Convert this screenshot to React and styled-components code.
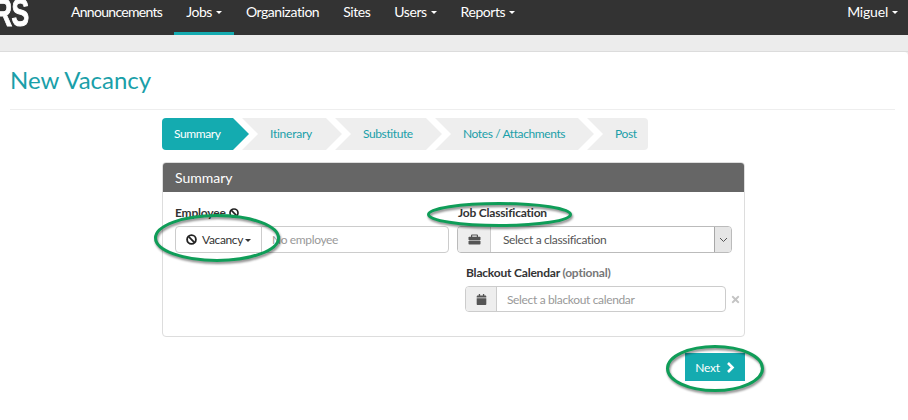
import React from 'react'
import styled, { createGlobalStyle } from 'styled-components'
import { FaCalendar, FaTimes } from 'react-icons/fa'

const TEAL = '#14abb0'

const GlobalStyle = createGlobalStyle`
    html, body {
        margin: 0;
        padding: 0;
        background: #ececec;
        font-family: Lato, "Open Sans", sans-serif;
        overflow: hidden;
    }
`

const Page = styled.div`
    position: relative;
    width: 908px;
    height: 420px;
    overflow: hidden;
`

const Navbar = styled.nav`
    display: flex;
    height: 35px;
    background: #333333;
    color: #ffffff;
    font-size: 14px;
`

const Logo = styled.div`
    flex: none;
    width: 59px;
    height: 35px;
    overflow: hidden;
`

const LogoText = styled.div`
    width: 60px;
    margin-left: -7px;
    font-family: "Liberation Sans", sans-serif;
    font-weight: 700;
    font-size: 39px;
    line-height: 26px;
    letter-spacing: -1px;
    -webkit-text-stroke: 1px #ffffff;
    transform: scaleX(0.68);
    transform-origin: left top;
`

const NavList = styled.div`
    display: flex;
    flex: 1;
`

const NavItem = styled.div`
    display: flex;
    align-items: flex-start;
    gap: 4px;
    height: 32px;
    padding: 0 ${p => (p.$right ? 10 : 12)}px 0 12px;
    line-height: 24px;
    letter-spacing: ${p => p.$spacing || '-0.45px'};
    border-bottom: 3px solid ${p => (p.$active ? TEAL : 'transparent')};
    margin-left: ${p => (p.$right ? 'auto' : '0')};
`

const Caret = styled.span`
    display: inline-block;
    flex: none;
    width: 0;
    height: 0;
    align-self: ${p => (p.$nav ? 'flex-start' : 'center')};
    margin-top: ${p => (p.$nav ? 11 : 1)}px;
    margin-left: ${p => p.$gap || 0}px;
    border-top: 3px solid ${p => p.$color || '#ffffff'};
    border-left: 3px solid transparent;
    border-right: 3px solid transparent;
`

const Band = styled.div`
    height: 16px;
    background: #ececec;
    border-bottom: 1px solid #dcdcdc;
`

const Content = styled.main`
    height: 368px;
    background: #ffffff;
    border-top-right-radius: 4px;
    padding: 0 13px 0 10px;
`

const TitleRow = styled.div`
    height: 57px;
    display: flex;
    align-items: center;
    border-bottom: 1px solid #eeeeee;
`

const Title = styled.h1`
    margin: 0 0 2px 0;
    font-size: 24px;
    font-weight: 400;
    color: #1a9fa9;
`

const Wizard = styled.div`
    width: 583px;
    margin: 8px 0 0 152px;
`

const Steps = styled.div`
    display: flex;
    height: 32px;
`

const Step = styled.div`
    display: flex;
    align-items: center;
    box-sizing: border-box;
    height: 32px;
    padding-bottom: 1px;
    width: ${p => p.$width}px;
    margin-left: ${p => (p.$first ? 0 : -7)}px;
    padding-left: ${p => (p.$first ? 12 : 28)}px;
    font-size: 12px;
    letter-spacing: ${p => (p.$wide ? '-0.25px' : '-0.4px')};
    background: ${p => (p.$active ? TEAL : '#eeeeee')};
    color: ${p => (p.$active ? '#ffffff' : '#1a9fa9')};
    border-radius: ${p => (p.$first ? '4px 0 0 4px' : p.$last ? '0 4px 4px 0' : '0')};
    clip-path: ${p =>
        p.$first
            ? 'polygon(0 0, calc(100% - 16px) 0, 100% 50%, calc(100% - 16px) 100%, 0 100%)'
            : p.$last
              ? 'polygon(0 0, 100% 0, 100% 100%, 0 100%, 16px 50%)'
              : 'polygon(0 0, calc(100% - 16px) 0, 100% 50%, calc(100% - 16px) 100%, 0 100%, 16px 50%)'};
`

const Panel = styled.section`
    margin-top: 12px;
    height: 175px;
    box-sizing: border-box;
    border: 1px solid #dddddd;
    border-radius: 4px;
    overflow: hidden;
`

const PanelHeading = styled.div`
    height: 30px;
    margin: -1px -1px 0;
    padding-left: 13px;
    background: #666666;
    color: #ffffff;
    font-size: 14px;
    line-height: 31px;
`

const PanelBody = styled.div`
    display: grid;
    grid-template-columns: 274px 275px;
    column-gap: 8px;
    padding: 12px 0 0 12px;
`

const Field = styled.div`
    display: flex;
    flex-direction: column;
    margin-left: ${p => p.$indent || 0}px;
    margin-top: ${p => p.$top || 0}px;
    grid-column: ${p => p.$column || 'auto'};
`

const Label = styled.label`
    display: flex;
    align-items: flex-start;
    gap: 3px;
    height: 22px;
    line-height: 18px;
    margin-left: ${p => p.$indent || 0}px;
    font-size: 12px;
    font-weight: 700;
    letter-spacing: -0.2px;
    color: #333333;
    white-space: nowrap;
`

const LabelIcon = styled.span`
    display: flex;
    height: 18px;
    align-items: center;
`

const Muted = styled.span`
    color: #777777;
`

const InputGroup = styled.div`
    display: flex;
    flex: none;
    height: ${p => p.$height || 27}px;
    width: ${p => p.$width || '100%'};
    box-sizing: border-box;
    border: 1px solid ${p => p.$border || '#cccccc'};
    border-radius: 4px;
    font-size: 12px;
    letter-spacing: -0.35px;
    color: #555555;
    overflow: hidden;
    background: #ffffff;
`

const Addon = styled.div`
    display: flex;
    align-items: center;
    justify-content: center;
    flex: none;
    width: ${p => p.$width}px;
    background: #eeeeee;
    border-right: 1px solid #cccccc;
    color: #555555;
    font-size: 11px;
`

const VacancyButton = styled.div`
    display: flex;
    align-items: center;
    flex: none;
    width: 86px;
    box-sizing: border-box;
    padding-left: 10px;
    gap: 5px;
    border-right: 1px solid #cccccc;
    color: #333333;
`

const TextInput = styled.input`
    flex: 1;
    min-width: 0;
    border: 0;
    outline: 0;
    padding: 0 10px;
    background: transparent;
    font-family: inherit;
    font-size: 12px;
    letter-spacing: -0.35px;
    &::placeholder {
        color: #999999;
        opacity: 1;
    }
`

const SelectText = styled.div`
    flex: 1;
    padding-left: 12px;
    line-height: 25px;
`

const SelectArrow = styled.div`
    display: flex;
    align-items: center;
    justify-content: center;
    flex: none;
    width: 16px;
    background: #e6e6e6;
    border-left: 1px solid #a8a8a8;
`

const ClearableRow = styled.div`
    display: flex;
    align-items: center;
    gap: 4px;
`

const ClearIcon = styled(FaTimes)`
    flex: none;
    color: #c4c4c4;
    font-size: 11px;
`

const Actions = styled.div`
    display: flex;
    justify-content: flex-end;
    margin-top: 16px;
`

const NextButton = styled.button`
    display: flex;
    align-items: center;
    justify-content: center;
    gap: 6px;
    width: 60px;
    height: 28px;
    border: 0;
    padding: 0;
    background: ${TEAL};
    color: #ffffff;
    font-family: inherit;
    font-size: 12px;
    letter-spacing: -0.2px;
`

const Ring = styled.svg`
    position: absolute;
    left: ${p => p.$left}px;
    top: ${p => p.$top}px;
    overflow: visible;
    filter: drop-shadow(1px 2px 1px rgba(0, 0, 0, 0.45));
`

function Ellipse({ left, top, width, height }) {
    return (
        <Ring $left={left} $top={top} width={width} height={height}>
            <ellipse
                cx={width / 2}
                cy={height / 2}
                rx={width / 2 - 1.5}
                ry={height / 2 - 1.5}
                fill="none"
                stroke="#0f9d58"
                strokeWidth="3"
            />
        </Ring>
    )
}

function BanIcon({ size }) {
    return (
        <svg width={size} height={size} viewBox="0 0 12 12" fill="none" stroke="#222222" strokeWidth="2">
            <circle cx="6" cy="6" r="4.8" />
            <line x1="2.6" y1="2.6" x2="9.4" y2="9.4" />
        </svg>
    )
}

function CaseIcon() {
    return (
        <svg width="13" height="11" viewBox="0 0 13 11" fill="#555555">
            <path d="M4 0.5h5a1 1 0 0 1 1 1V3H3V1.500a1 1 0 0 1 1-1zM4.200 1.600V3h4.600V1.600z" fillRule="evenodd" />
            <rect x="0.500" y="2.800" width="12" height="3.400" rx="0.800" />
            <rect x="0.500" y="6.700" width="12" height="3.800" rx="0.800" />
        </svg>
    )
}

function ArrowIcon() {
    return (
        <svg width="9" height="6" viewBox="0 0 9 6" fill="none" stroke="#555555" strokeWidth="1">
            <polyline points="1,1 4.500,4.500 8,1" />
        </svg>
    )
}

function NextIcon() {
    return (
        <svg width="9" height="11" viewBox="0 0 9 11" fill="none" stroke="#ffffff" strokeWidth="2.600">
            <polyline points="2,1 6.500,5.500 2,10" />
        </svg>
    )
}

const steps = [
    { name: 'Summary', width: 87, first: true, active: true },
    { name: 'Itinerary', width: 100, wide: true },
    { name: 'Substitute', width: 107 },
    { name: 'Notes / Attachments', width: 159 },
    { name: 'Post', width: 61, last: true },
]

function App() {
    return (
        <Page>
            <GlobalStyle />
            <Navbar>
                <Logo><LogoText>RS</LogoText></Logo>
                <NavList>
                    <NavItem $spacing="-0.7px">Announcements</NavItem>
                    <NavItem $active>Jobs <Caret $nav /></NavItem>
                    <NavItem>Organization</NavItem>
                    <NavItem>Sites</NavItem>
                    <NavItem>Users <Caret $nav /></NavItem>
                    <NavItem>Reports <Caret $nav /></NavItem>
                    <NavItem $right $spacing="-0.2px">Miguel <Caret $nav /></NavItem>
                </NavList>
            </Navbar>
            <Band />
            <Content>
                <TitleRow>
                    <Title>New Vacancy</Title>
                </TitleRow>
                <Wizard>
                    <Steps>
                        {steps.map(step => (
                            <Step
                                key={step.name}
                                $width={step.width}
                                $first={step.first}
                                $last={step.last}
                                $active={step.active}
                                $wide={step.wide}
                            >
                                {step.name}
                            </Step>
                        ))}
                    </Steps>
                    <Panel>
                        <PanelHeading>Summary</PanelHeading>
                        <PanelBody>
                            <Field>
                                <Label>Employee <LabelIcon><BanIcon size={10} /></LabelIcon></Label>
                                <InputGroup>
                                    <VacancyButton>
                                        <BanIcon size={11} />
                                        Vacancy
                                        <Caret $gap={-3} $color="#333333" />
                                    </VacancyButton>
                                    <TextInput placeholder="No employee" />
                                </InputGroup>
                            </Field>
                            <Field>
                                <Label $indent={1}>Job Classification</Label>
                                <InputGroup $border="#bbbbbb">
                                    <Addon $width={32}><CaseIcon /></Addon>
                                    <SelectText>Select a classification</SelectText>
                                    <SelectArrow><ArrowIcon /></SelectArrow>
                                </InputGroup>
                            </Field>
                            <Field $column="2" $indent={8} $top={11}>
                                <Label $indent={1}>
                                    <span>Blackout Calendar <Muted>(optional)</Muted></span>
                                </Label>
                                <ClearableRow>
                                    <InputGroup $width="261px" $height={26}>
                                        <Addon $width={30}><FaCalendar /></Addon>
                                        <TextInput placeholder="Select a blackout calendar" />
                                    </InputGroup>
                                    <ClearIcon />
                                </ClearableRow>
                            </Field>
                        </PanelBody>
                    </Panel>
                    <Actions>
                        <NextButton>Next <NextIcon /></NextButton>
                    </Actions>
                </Wizard>
            </Content>
            <Ellipse left={154} top={214} width={126} height={48} />
            <Ellipse left={427} top={202} width={145} height={25} />
            <Ellipse left={666} top={345} width={98} height={47} />
        </Page>
    )
}

export default App
